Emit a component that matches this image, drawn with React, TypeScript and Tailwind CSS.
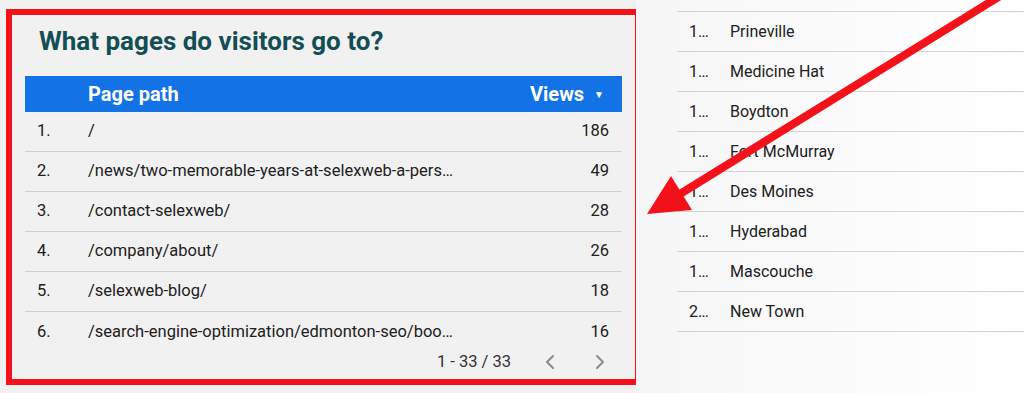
import { ChevronLeft, ChevronRight } from "lucide-react";

const pages = [
  { path: "/", views: 186 },
  { path: "/news/two-memorable-years-at-selexweb-a-pers…", views: 49 },
  { path: "/contact-selexweb/", views: 28 },
  { path: "/company/about/", views: 26 },
  { path: "/selexweb-blog/", views: 18 },
  { path: "/search-engine-optimization/edmonton-seo/boo…", views: 16 },
];

const cities = [
  { rank: "1…", name: "Prineville" },
  { rank: "1…", name: "Medicine Hat" },
  { rank: "1…", name: "Boydton" },
  { rank: "1…", name: "Fort McMurray" },
  { rank: "1…", name: "Des Moines" },
  { rank: "1…", name: "Hyderabad" },
  { rank: "1…", name: "Mascouche" },
  { rank: "2…", name: "New Town" },
];

function PagesTable() {
  return (
    <div className="w-[636px] shrink-0 bg-[#f1f1f1] pl-[6px] pt-[9px]">
      <div className="flex h-[376px] w-[635px] flex-col border-[6px] border-[#f3121a] px-[13px]">
        <h2 className="mt-[11px] pl-[14px] text-[26px] font-bold leading-[30px] text-[#144e55]">
          What pages do visitors go to?
        </h2>
        <div className="mt-[20px] flex h-[36px] items-center bg-[#1372e6] text-[20px] font-bold text-white">
          <span className="w-[63px]" />
          <span className="flex-1">Page path</span>
          <span>Views</span>
          <span className="ml-[10px] mr-[18px] text-[10px]">▼</span>
        </div>
        {pages.map((p, i) => (
          <div
            key={p.path}
            className={`flex h-[40px] items-center text-[16.5px] text-[#202020] ${i < pages.length - 1 ? "border-b border-[#cfcfcf]" : ""}`}
          >
            <span className="w-[63px] pl-[12px]">{i + 1}.</span>
            <span className="flex-1">{p.path}</span>
            <span className="pr-[13px]">{p.views}</span>
          </div>
        ))}
        <div className="flex h-[20px] items-center justify-end text-[16.5px] text-[#333]">
          <span>1 - 33 / 33</span>
          <ChevronLeft className="ml-[27px] h-[24px] w-[24px] text-[#8a8a8a]" strokeWidth={2} />
          <ChevronRight className="ml-[26px] mr-[10px] h-[24px] w-[24px] text-[#8a8a8a]" strokeWidth={2} />
        </div>
      </div>
    </div>
  );
}

function CityTable() {
  return (
    <div className="flex-1 bg-gradient-to-r from-[#f6f6f6] to-white pl-[41px] pt-[11px]">
      <div className="border-t border-[#d4d4d4]">
        {cities.map((c, i) => (
          <div key={i} className="flex h-[40px] items-center border-b border-[#d4d4d4] text-[16px] text-[#202020]">
            <span className="w-[53px] pl-[12px]">{c.rank}</span>
            <span>{c.name}</span>
          </div>
        ))}
      </div>
    </div>
  );
}

export default function App() {
  return (
    <div className="relative flex h-[393px] w-[1024px] overflow-hidden bg-white font-['Roboto',sans-serif]">
      <PagesTable />
      <CityTable />
      <svg className="pointer-events-none absolute inset-0" width="1024" height="393" viewBox="0 0 1024 393">
        <line x1="1000" y1="-4" x2="680" y2="194" stroke="#f3121a" strokeWidth="8" />
        <polygon points="647,214 692,210 671,176" fill="#f3121a" />
      </svg>
    </div>
  );
}
